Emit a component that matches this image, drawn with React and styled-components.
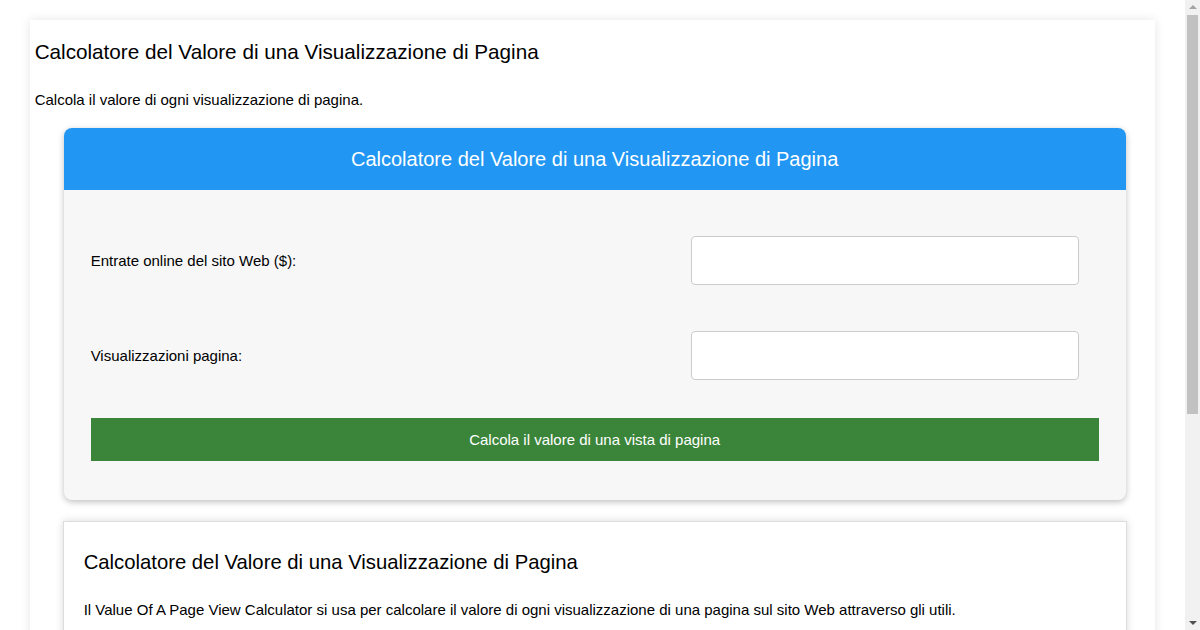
import React from 'react';
import styled, { createGlobalStyle } from 'styled-components';

const GlobalStyle = createGlobalStyle`
  body {
    margin: 0;
    padding-right: 15px;
    background: #fff;
    font-family: "Liberation Sans", Arial, sans-serif;
    color: #000;
  }
`;

const Page = styled.div`
  width: 95%;
  margin: 20px auto;
  padding: 20px 5px 30px;
  box-sizing: border-box;
  background: #fff;
  box-shadow: 0 0 10px rgba(0, 0, 0, 0.1);
`;

const Title = styled.h1`
  font-size: 20.7px;
  font-weight: normal;
  line-height: 23px;
  margin: 0;
`;

const Intro = styled.p`
  font-size: 15px;
  line-height: 17px;
  margin: 28px 0 20px;
`;

const Card = styled.div`
  width: 1062px;
  margin: 0 0 0 29px;
  border-radius: 8px;
  overflow: hidden;
  background: #f7f7f7;
  box-shadow: 0 2px 6px rgba(0, 0, 0, 0.25);
`;

const CardHeader = styled.div`
  background: #2196f3;
  color: #fff;
  height: 62px;
  display: flex;
  align-items: center;
  justify-content: center;
  font-size: 20px;
`;

const CardBody = styled.div`
  padding: 23px 27px 39px;
`;

const Row = styled.div`
  display: grid;
  grid-template-columns: 600px 388px;
  align-items: center;
  height: 95px;
`;

const Label = styled.label`
  font-size: 15px;
`;

const Input = styled.input`
  height: 49px;
  box-sizing: border-box;
  border: 1px solid #ccc;
  border-radius: 4px;
  background: #fff;
  font-size: 15px;
  padding: 0 10px;
`;

const Button = styled.button`
  display: block;
  width: 100%;
  height: 43px;
  margin-top: 15px;
  border: none;
  background: #3b853a;
  color: #fff;
  font-family: "Liberation Sans", Arial, sans-serif;
  font-size: 15px;
`;

const InfoCard = styled.div`
  width: 1064px;
  margin: 21px 0 0 28px;
  box-sizing: border-box;
  border: 1px solid #ddd;
  background: #fff;
  padding: 29px 20px 20px;
  box-shadow: 0 0 8px rgba(0, 0, 0, 0.15);
`;

const InfoTitle = styled.h2`
  font-size: 20.3px;
  font-weight: normal;
  line-height: 23px;
  margin: 0 0 25px;
`;

const InfoText = styled.p`
  font-size: 15px;
  line-height: 22px;
  margin: 0 0 16px;
`;

const Scrollbar = styled.div`
  position: fixed;
  top: 0;
  right: 0;
  width: 15px;
  height: 100vh;
  background: #f1f1f1;
  display: flex;
  flex-direction: column;
  align-items: center;
`;

const Arrow = styled.div`
  width: 0;
  height: 0;
  margin: 5px 0;
  border-left: 4px solid transparent;
  border-right: 4px solid transparent;
  ${(p) => (p.$down ? 'border-top: 4px solid #505050;' : 'border-bottom: 4px solid #a3a3a3;')}
`;

const Thumb = styled.div`
  width: 11px;
  height: 399px;
  margin-top: 1px;
  background: #c1c1c1;
`;

const Spacer = styled.div`
  flex: 1;
`;

export default function App() {
  return (
    <>
      <GlobalStyle />
      <Page>
        <Title>Calcolatore del Valore di una Visualizzazione di Pagina</Title>
        <Intro>Calcola il valore di ogni visualizzazione di pagina.</Intro>
        <Card>
          <CardHeader>Calcolatore del Valore di una Visualizzazione di Pagina</CardHeader>
          <CardBody>
            <Row>
              <Label>Entrate online del sito Web ($):</Label>
              <Input type="text" />
            </Row>
            <Row>
              <Label>Visualizzazioni pagina:</Label>
              <Input type="text" />
            </Row>
            <Button>Calcola il valore di una vista di pagina</Button>
          </CardBody>
        </Card>
        <InfoCard>
          <InfoTitle>Calcolatore del Valore di una Visualizzazione di Pagina</InfoTitle>
          <InfoText>
            Il Value Of A Page View Calculator si usa per calcolare il valore di ogni visualizzazione di una pagina sul sito Web attraverso gli utili.
          </InfoText>
          <InfoText>
            Valore di una visualizzazione di pagina = Entrate online del sito Web / Visualizzazioni pagina
          </InfoText>
        </InfoCard>
      </Page>
      <Scrollbar>
        <Arrow />
        <Thumb />
        <Spacer />
        <Arrow $down />
      </Scrollbar>
    </>
  );
}
